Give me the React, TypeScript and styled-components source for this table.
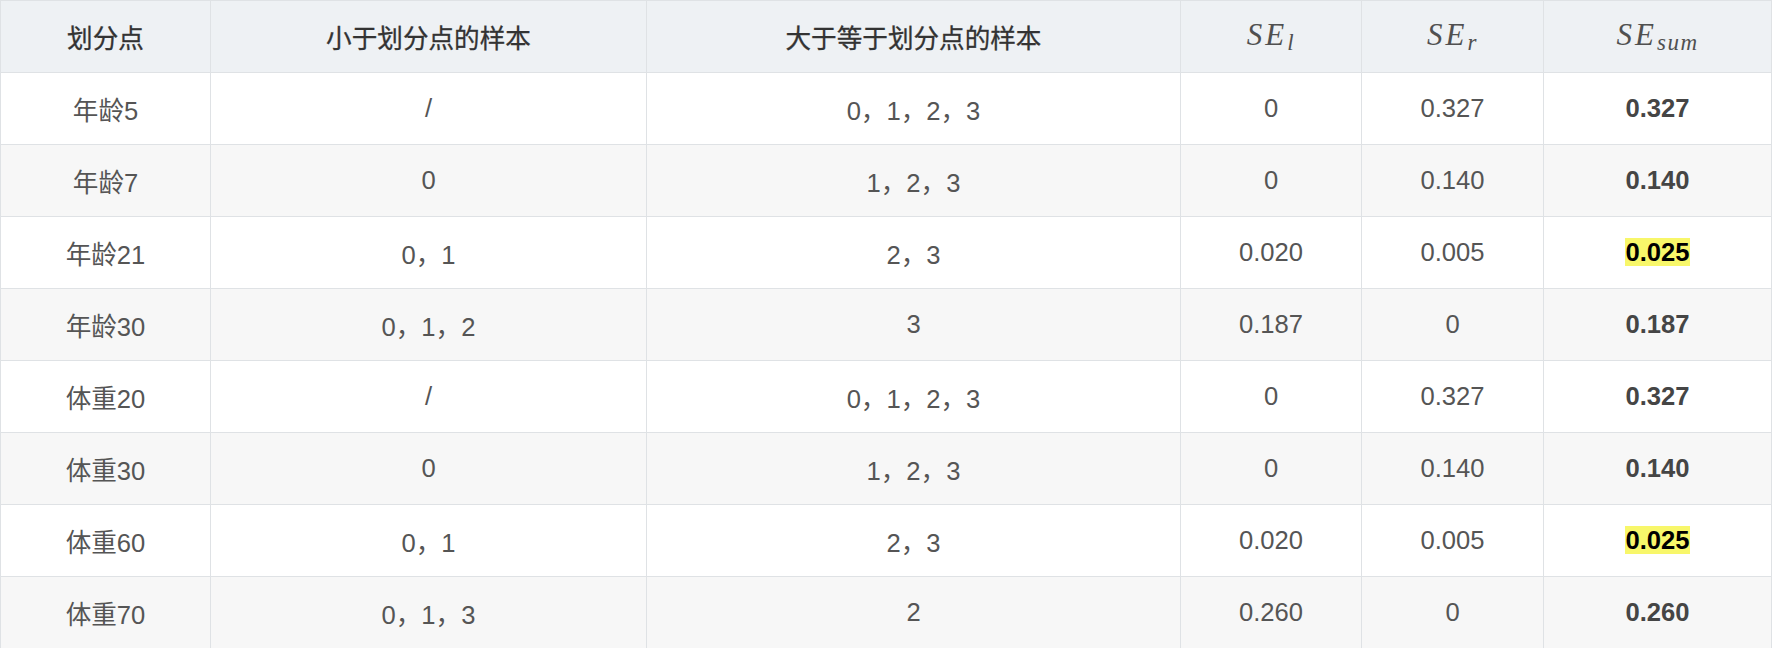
import React from 'react';
import styled, { createGlobalStyle } from 'styled-components';

const GlobalStyle = createGlobalStyle`
    html, body {
        margin: 0;
        padding: 0;
        background: #ffffff;
    }
    body {
        font-family: 'Liberation Sans', 'Noto Sans CJK SC', sans-serif;
        -webkit-font-smoothing: antialiased;
    }
`;

const Table = styled.table`
    width: 1772px;
    table-layout: fixed;
    border-collapse: collapse;
    font-size: 25.6px;
    color: #555555;
`;

const HeadRow = styled.tr`
    height: 72px;
    background: #eef1f4;
`;

const Row = styled.tr<{ $striped: boolean }>`
    height: 72px;
    background: ${(p) => (p.$striped ? '#f7f7f7' : '#ffffff')};
`;

const Th = styled.th`
    border: 1px solid #dfe2e5;
    padding: 0 13px;
    text-align: center;
    font-weight: 400;
    color: #333333;
    -webkit-text-stroke: 0.3px #333333;
`;

const Td = styled.td`
    border: 1px solid #dfe2e5;
    padding: 0 13px;
    text-align: center;
    font-weight: 400;
`;

const Strong = styled.strong`
    font-weight: 700;
    color: #454545;
`;

const Mark = styled.mark`
    background: #f8f76a;
    color: #000000;
    padding: 0;
`;

const MathVar = styled.span`
    font-family: 'Liberation Serif', 'DejaVu Serif', serif;
    font-style: italic;
    font-weight: 400;
    font-size: 31px;
    letter-spacing: 3px;
    color: #505050;
    -webkit-text-stroke: 0;
`;

const Sub = styled.sub`
    font-size: 23px;
    vertical-align: -5px;
    letter-spacing: 1.5px;
`;

type Item = {
    point: string;
    left: string;
    right: string;
    seL: string;
    seR: string;
    sum: string;
    best?: boolean;
};

const rows: Item[] = [
    { point: '年龄5', left: '/', right: '0，1，2，3', seL: '0', seR: '0.327', sum: '0.327' },
    { point: '年龄7', left: '0', right: '1，2，3', seL: '0', seR: '0.140', sum: '0.140' },
    { point: '年龄21', left: '0，1', right: '2，3', seL: '0.020', seR: '0.005', sum: '0.025', best: true },
    { point: '年龄30', left: '0，1，2', right: '3', seL: '0.187', seR: '0', sum: '0.187' },
    { point: '体重20', left: '/', right: '0，1，2，3', seL: '0', seR: '0.327', sum: '0.327' },
    { point: '体重30', left: '0', right: '1，2，3', seL: '0', seR: '0.140', sum: '0.140' },
    { point: '体重60', left: '0，1', right: '2，3', seL: '0.020', seR: '0.005', sum: '0.025', best: true },
    { point: '体重70', left: '0，1，3', right: '2', seL: '0.260', seR: '0', sum: '0.260' },
];

const SE = ({ sub }: { sub: string }) => (
    <MathVar>
        SE<Sub>{sub}</Sub>
    </MathVar>
);

const App = () => {
    return (
        <>
            <GlobalStyle />
            <Table>
                <colgroup>
                    <col style={{ width: 210 }} />
                    <col style={{ width: 436 }} />
                    <col style={{ width: 534 }} />
                    <col style={{ width: 181 }} />
                    <col style={{ width: 182 }} />
                    <col />
                </colgroup>
                <thead>
                    <HeadRow>
                        <Th>划分点</Th>
                        <Th>小于划分点的样本</Th>
                        <Th>大于等于划分点的样本</Th>
                        <Th>
                            <SE sub="l" />
                        </Th>
                        <Th>
                            <SE sub="r" />
                        </Th>
                        <Th>
                            <SE sub="sum" />
                        </Th>
                    </HeadRow>
                </thead>
                <tbody>
                    {rows.map((r, i) => (
                        <Row key={r.point} $striped={i % 2 === 1}>
                            <Td>{r.point}</Td>
                            <Td>{r.left}</Td>
                            <Td>{r.right}</Td>
                            <Td>{r.seL}</Td>
                            <Td>{r.seR}</Td>
                            <Td>
                                <Strong>{r.best ? <Mark>{r.sum}</Mark> : r.sum}</Strong>
                            </Td>
                        </Row>
                    ))}
                </tbody>
            </Table>
        </>
    );
};

export default App;
